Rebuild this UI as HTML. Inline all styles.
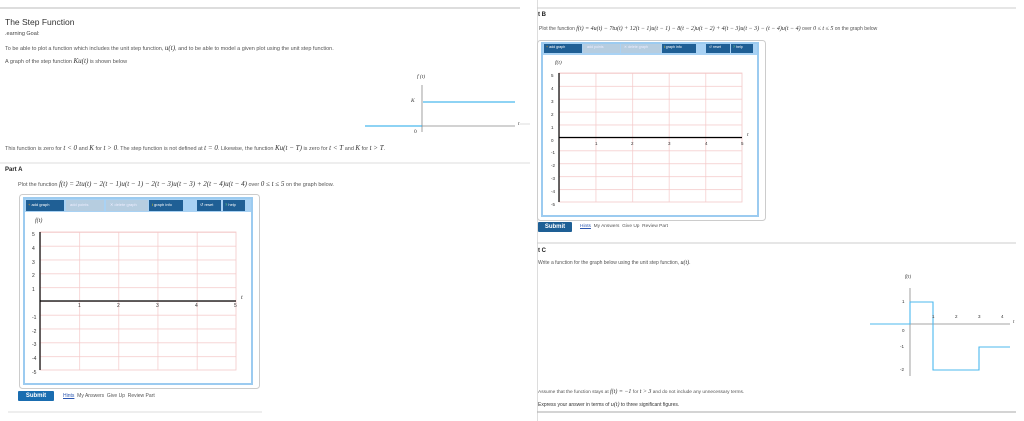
<!DOCTYPE html>
<html><head><meta charset="utf-8"><style>
body{margin:0;width:1024px;height:421px;background:#fff;position:relative;overflow:hidden;font-family:"Liberation Sans",sans-serif;color:#333}
.t{position:absolute;white-space:nowrap;font-size:5.5px;color:#555}
.m{font-family:"Liberation Serif",serif;font-style:italic;font-size:7px;color:#333}
.b{font-weight:bold;color:#222}
.btn{position:absolute;background:#1a6db0;color:#fff;font-size:6px;font-weight:bold;text-align:center;line-height:10px;border-radius:1px}
.lk{color:#2a56b0;text-decoration:underline}
</style></head><body>
<svg width="1024" height="421" style="position:absolute;left:0;top:0">
<defs>
<pattern id="gA" x="40" y="232" width="39.2" height="13.8" patternUnits="userSpaceOnUse"><path d="M0 0.3H39.2M0.3 0V13.8" stroke="#f4c8c8" stroke-width="0.8" fill="none"/></pattern>
<pattern id="gB" x="559" y="73" width="36.6" height="12.9" patternUnits="userSpaceOnUse"><path d="M0 0.3H36.6M0.3 0V12.9" stroke="#f4c8c8" stroke-width="0.8" fill="none"/></pattern>
</defs>
<!-- rules -->
<line x1="0" y1="8" x2="520" y2="8" stroke="#bbb"/>
<line x1="0" y1="163" x2="520" y2="163" stroke="#ddd"/>
<line x1="8" y1="412" x2="262" y2="412" stroke="#ddd"/>
<line x1="537.5" y1="0" x2="537.5" y2="421" stroke="#ddd"/>
<line x1="537" y1="8" x2="1016" y2="8" stroke="#ccc"/>
<line x1="537" y1="243" x2="1016" y2="243" stroke="#ccc"/>
<line x1="537" y1="412" x2="1016" y2="412" stroke="#aaa"/>
<line x1="520" y1="124" x2="530" y2="124" stroke="#ddd"/>
<line x1="520" y1="163" x2="530" y2="163" stroke="#ddd"/>
<!-- step graph top -->
<line x1="422" y1="85" x2="422" y2="132" stroke="#888" stroke-width="0.8"/>
<line x1="422" y1="126" x2="515" y2="126" stroke="#888" stroke-width="0.8"/>
<line x1="365" y1="126" x2="422" y2="126" stroke="#1ea7e8" stroke-width="1"/>
<line x1="423" y1="102" x2="515" y2="102" stroke="#1ea7e8" stroke-width="1"/>
<!-- widget A -->
<rect x="19.5" y="194.5" width="240" height="194" rx="3" fill="#fff" stroke="#ccc"/>
<rect x="24" y="198" width="228" height="186" fill="#fff" stroke="#9ccbf0" stroke-width="2"/>
<rect x="25" y="199" width="226" height="13" fill="#a9d2f4"/>
<rect x="26" y="200" width="38" height="11" fill="#1f5f95"/>
<rect x="66" y="200" width="38" height="11" fill="#b6cde0"/>
<rect x="106" y="200" width="42" height="11" fill="#b6cde0"/>
<rect x="149" y="200" width="34" height="11" fill="#1f5f95"/>
<rect x="197" y="200" width="24" height="11" fill="#1f5f95"/>
<rect x="223" y="200" width="22" height="11" fill="#1f5f95"/>
<rect x="40" y="232" width="196" height="138" fill="url(#gA)" stroke="#f4c8c8" stroke-width="0.8"/>
<line x1="40" y1="232" x2="40" y2="370" stroke="#000" stroke-width="1.2"/>
<line x1="40" y1="301" x2="236" y2="301" stroke="#000" stroke-width="1.2"/>
<!-- widget B -->
<rect x="537.5" y="40.5" width="228" height="180" rx="3" fill="#fff" stroke="#ccc"/>
<rect x="542" y="43" width="216" height="173" fill="#fff" stroke="#9ccbf0" stroke-width="2"/>
<rect x="543" y="44" width="214" height="11" fill="#a9d2f4"/>
<rect x="544" y="44" width="38" height="9" fill="#1f5f95"/>
<rect x="583" y="44" width="37" height="9" fill="#b6cde0"/>
<rect x="621" y="44" width="40" height="9" fill="#b6cde0"/>
<rect x="662" y="44" width="34" height="9" fill="#1f5f95"/>
<rect x="706" y="44" width="24" height="9" fill="#1f5f95"/>
<rect x="731" y="44" width="22" height="9" fill="#1f5f95"/>
<rect x="559" y="73" width="183" height="129" fill="url(#gB)" stroke="#f4c8c8" stroke-width="0.8"/>
<line x1="559" y1="73" x2="559" y2="202" stroke="#000" stroke-width="1.2"/>
<line x1="559" y1="137.5" x2="742" y2="137.5" stroke="#000" stroke-width="1.2"/>
<!-- graph C -->
<line x1="910" y1="288" x2="910" y2="376" stroke="#888" stroke-width="0.8"/>
<line x1="910" y1="324" x2="1010" y2="324" stroke="#888" stroke-width="0.8"/>
<path d="M870 324H910V302H933V370H979V347H1010" stroke="#4cb8ee" stroke-width="1.1" fill="none"/>
</svg>
<div class="t" style="left:5px;top:17px;font-size:8.5px;color:#333">The Step Function</div>
<div class="t" style="left:5px;top:31px;color:#444">.earning Goal:</div>
<div class="t" style="left:5px;top:44px">To be able to plot a function which includes the unit step function, <span class="m">u(t)</span>, and to be able to model a given plot using the unit step function.</div>
<div class="t" style="left:5px;top:57px">A graph of the step function <span class="m">Ku(t)</span> is shown below</div>
<div class="t m" style="left:417px;top:74px;font-size:5.5px">f (t)</div>
<div class="t m" style="left:411px;top:98px;font-size:5.5px">K</div>
<div class="t m" style="left:518px;top:121px;font-size:5.5px">t</div>
<div class="t m" style="left:414px;top:129px;font-size:5.5px;font-style:normal">0</div>
<div class="t" style="left:5px;top:144px">This function is zero for <span class="m">t &lt; 0</span> and <span class="m">K</span> for <span class="m">t &gt; 0</span>. The step function is not defined at <span class="m">t = 0</span>. Likewise, the function <span class="m">Ku(t − T)</span> is zero for <span class="m">t &lt; T</span> and <span class="m">K</span> for <span class="m">t &gt; T</span>.</div>
<div class="t b" style="left:5px;top:167px;font-size:6px">Part A</div>
<div class="t" style="left:18px;top:180px">Plot the function <span class="m">f(t) = 2tu(t) − 2(t − 1)u(t − 1) − 2(t − 3)u(t − 3) + 2(t − 4)u(t − 4)</span> over <span class="m">0 ≤ t ≤ 5</span> on the graph below.</div>
<div class="t m" style="left:35px;top:218px;font-size:6px">f(t)</div>
<div class="t" style="left:32px;top:229px;font-size:5px;line-height:13.8px;color:#333">5<br>4<br>3<br>2<br>1<br><br>-1<br>-2<br>-3<br>-4<br>-5</div>
<div class="t" style="left:78px;top:303px;font-size:5px;color:#333">1</div>
<div class="t" style="left:117px;top:303px;font-size:5px;color:#333">2</div>
<div class="t" style="left:156px;top:303px;font-size:5px;color:#333">3</div>
<div class="t" style="left:195px;top:303px;font-size:5px;color:#333">4</div>
<div class="t" style="left:234px;top:303px;font-size:5px;color:#333">5</div>
<div class="t m" style="left:241px;top:295px;font-size:6px">t</div>
<div class="t" style="left:28px;top:201.5px;font-size:4px;color:#fff"><span style="color:#f90">+</span> add graph</div>
<div class="t" style="left:70px;top:201.5px;font-size:4px;color:#eef">add points</div>
<div class="t" style="left:110px;top:201.5px;font-size:4px;color:#eef">✕ delete graph</div>
<div class="t" style="left:152px;top:201.5px;font-size:4px;color:#fff"><span style="color:#fd0">i</span> graph info</div>
<div class="t" style="left:200px;top:201.5px;font-size:4px;color:#fff">↺ reset</div>
<div class="t" style="left:225px;top:201.5px;font-size:4px;color:#fff"><span style="color:#7e7">?</span> help</div>
<div class="btn" style="left:18px;top:391px;width:36px;height:10px">Submit</div>
<div class="t" style="left:63px;top:393px;font-size:5px"><span class="lk">Hints</span> &nbsp;My Answers &nbsp;Give Up &nbsp;Review Part</div>
<!-- right -->
<div class="t b" style="left:538px;top:12px;font-size:6px">t B</div>
<div class="t" style="left:539px;top:26px;font-size:5px">Plot the function <span class="m" style="font-size:6px">f(t) = 4u(t) − 7tu(t) + 12(t − 1)u(t − 1) − 8(t − 2)u(t − 2) + 4(t − 3)u(t − 3) − (t − 4)u(t − 4)</span> over <span class="m" style="font-size:6px">0 ≤ t ≤ 5</span> on the graph below</div>
<div class="t" style="left:546px;top:45px;font-size:3.6px;color:#fff"><span style="color:#f90">+</span> add graph</div>
<div class="t" style="left:587px;top:45px;font-size:3.6px;color:#eef">add points</div>
<div class="t" style="left:624px;top:45px;font-size:3.6px;color:#eef">✕ delete graph</div>
<div class="t" style="left:664px;top:45px;font-size:3.6px;color:#fff"><span style="color:#fd0">i</span> graph info</div>
<div class="t" style="left:709px;top:45px;font-size:3.6px;color:#fff">↺ reset</div>
<div class="t" style="left:733px;top:45px;font-size:3.6px;color:#fff"><span style="color:#7e7">?</span> help</div>
<div class="t m" style="left:555px;top:60px;font-size:5.5px">f(t)</div>
<div class="t" style="left:551px;top:70px;font-size:4.5px;line-height:12.9px;color:#333">5<br>4<br>3<br>2<br>1<br>0<br>-1<br>-2<br>-3<br>-4<br>-5</div>
<div class="t" style="left:595px;top:141px;font-size:4.5px;color:#333">1</div>
<div class="t" style="left:631px;top:141px;font-size:4.5px;color:#333">2</div>
<div class="t" style="left:668px;top:141px;font-size:4.5px;color:#333">3</div>
<div class="t" style="left:705px;top:141px;font-size:4.5px;color:#333">4</div>
<div class="t" style="left:741px;top:141px;font-size:4.5px;color:#333">5</div>
<div class="t m" style="left:747px;top:132px;font-size:5.5px">t</div>
<div class="btn" style="left:538px;top:222px;width:34px;height:10px;line-height:10px;background:#1e5f95">Submit</div>
<div class="t" style="left:580px;top:224px;font-size:4.8px"><span class="lk">Hints</span> &nbsp;My Answers &nbsp;Give Up &nbsp;Review Part</div>
<div class="t b" style="left:538px;top:248px;font-size:6px">t C</div>
<div class="t" style="left:538px;top:260px;font-size:5px">Write a function for the graph below using the unit step function, <span class="m" style="font-size:6px">u(t)</span>.</div>
<div class="t m" style="left:905px;top:275px;font-size:5px">f(t)</div>
<div class="t" style="left:902px;top:299px;font-size:4.5px;color:#333">1</div>
<div class="t" style="left:902px;top:328px;font-size:4.5px;color:#333">0</div>
<div class="t" style="left:900px;top:344px;font-size:4.5px;color:#333">-1</div>
<div class="t" style="left:900px;top:367px;font-size:4.5px;color:#333">-2</div>
<div class="t" style="left:932px;top:314px;font-size:4.5px;color:#333">1</div>
<div class="t" style="left:955px;top:314px;font-size:4.5px;color:#333">2</div>
<div class="t" style="left:978px;top:314px;font-size:4.5px;color:#333">3</div>
<div class="t" style="left:1001px;top:314px;font-size:4.5px;color:#333">4</div>
<div class="t m" style="left:1013px;top:320px;font-size:5px">t</div>
<div class="t" style="left:538px;top:389px;font-size:4.8px">Assume that the function stays at <span class="m" style="font-size:6px">f(t) = −1</span> for <span class="m" style="font-size:6px">t &gt; 3</span> and do not include any unnecessary terms.</div>
<div class="t" style="left:538px;top:402px;font-size:5px;color:#333">Express your answer in terms of <span class="m" style="font-size:6px">u(t)</span> to three significant figures.</div>
</body></html>
